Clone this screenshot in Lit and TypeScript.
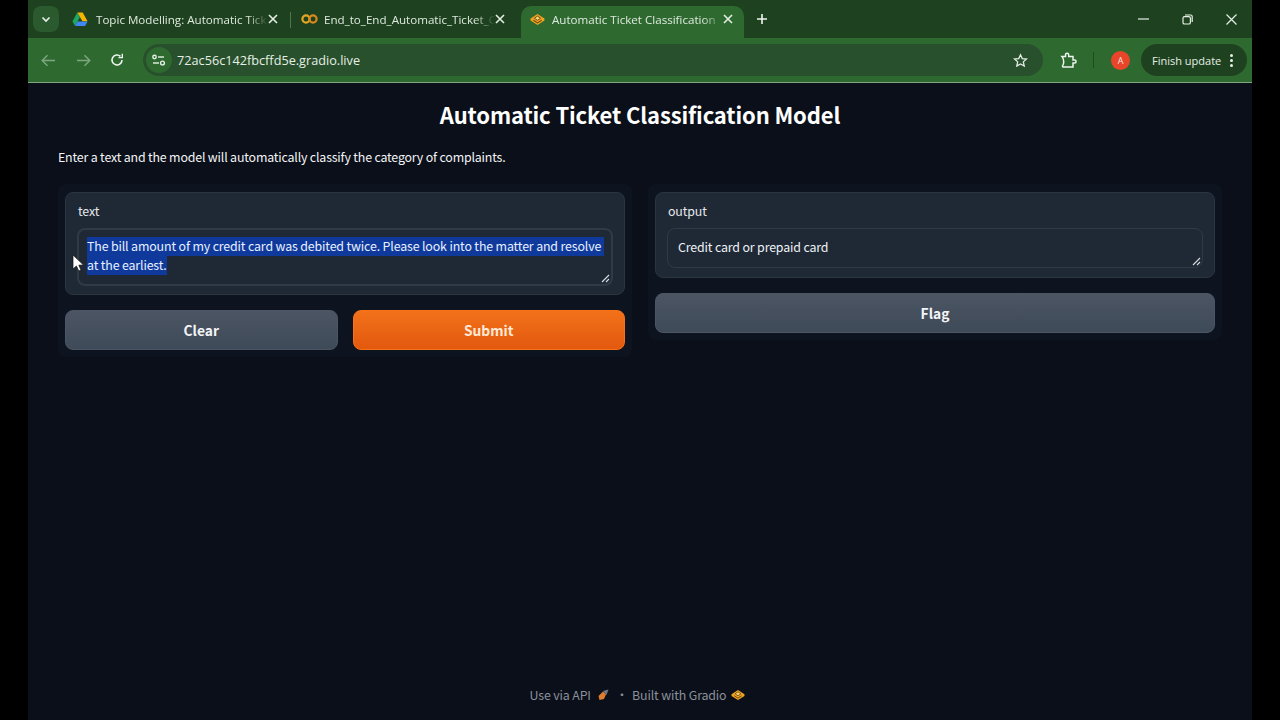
import { LitElement, html, css, svg } from "lit";
import { customElement } from "lit/decorators.js";

const gradioLogo = (size: number) => html`<svg width=${size} height=${size} viewBox="0 0 16 16" fill="none">
  <path d="M8 2.2 L15.4 7 V9 L8 13.8 L0.6 9 V7 Z" fill="#f0a21f"/>
  <path d="M8 4.4 L11.4 6.6 L8 8.8 L4.6 6.6 Z" fill="#f9d776" stroke="#6b4d10" stroke-width="1"/>
  <path d="M3.6 8.8 L8 11.6 L12.4 8.8" stroke="#6b4d10" stroke-width="1.1"/>
</svg>`;

const closeIcon = html`<svg class="x" width="10" height="10" viewBox="0 0 10 10">
  <path d="M1 1 L9 9 M9 1 L1 9" stroke="#e6efe6" stroke-width="1.6"/>
</svg>`;

@customElement("app-root")
export class AppRoot extends LitElement {
  static styles = css`
    :host {
      display: block;
      width: 1280px;
      height: 720px;
      background: #000;
      overflow: hidden;
      font-family: "Noto Sans CJK SC", "Noto Sans", sans-serif;
    }
    .frame {
      position: relative;
      width: 1224px;
      height: 720px;
      margin: 0 auto;
      display: flex;
      flex-direction: column;
      background: #0b0f19;
    }

    /* browser chrome */
    .tabstrip {
      height: 38px;
      background: #1e421f;
      display: flex;
      align-items: flex-end;
      font-family: "Open Sans", "Noto Sans", sans-serif;
      font-size: 11.6px;
      color: #dfe9df;
    }
    .tab-menu {
      width: 26px;
      height: 26px;
      margin: 0 0 6px 5px;
      border-radius: 8px;
      background: #2b5a2e;
      display: flex;
      align-items: center;
      justify-content: center;
    }
    .tab {
      height: 32px;
      display: flex;
      align-items: center;
      box-sizing: border-box;
      position: relative;
    }
    .tab .label {
      flex: 1;
      min-width: 0;
      white-space: nowrap;
      overflow: hidden;
      -webkit-mask-image: linear-gradient(90deg, #000 88%, transparent);
      mask-image: linear-gradient(90deg, #000 88%, transparent);
    }
    .tab.one { width: 226px; margin-left: 6px; padding: 0 13px 6px 7px; }
    .tab.one .label { margin-left: 8px; }
    .tab.two { width: 230px; padding: 0 16px 6px 10px; }
    .tab.two .label { margin-left: 6px; }
    .tab.one::after {
      content: "";
      position: absolute;
      right: 0;
      top: 6px;
      width: 1px;
      height: 16px;
      background: #4a7a4c;
    }
    .tab.active {
      width: 223px;
      background: #2e6a30;
      border-radius: 10px 10px 0 0;
      padding: 0 11px 6px 9px;
    }
    .tab.active .label { margin-left: 7px; }
    .plus { margin: 0 0 6px 12px; width: 14px; height: 26px; display: flex; align-items: center; }
    .win {
      margin-left: auto;
      display: flex;
      align-items: center;
      gap: 33px;
      height: 38px;
      padding-right: 15px;
      align-self: flex-start;
    }

    .toolbar {
      height: 44px;
      background: #2e6a30;
      border-bottom: 1px solid #7fa681;
      display: flex;
      align-items: center;
      flex: none;
    }
    .nav {
      display: flex;
      align-items: center;
      gap: 19.5px;
      padding-left: 13px;
      width: 102px;
      box-sizing: border-box;
    }
    .omni {
      margin-left: 13px;
      width: 900px;
      height: 32px;
      border-radius: 16px;
      background: #28502c;
      display: flex;
      align-items: center;
      color: #e6efe6;
      font-family: "Open Sans", "Noto Sans", sans-serif;
      font-size: 12.7px;
      box-sizing: border-box;
    }
    .tune {
      width: 26px;
      height: 26px;
      margin-left: 3px;
      border-radius: 50%;
      background: #2e6a30;
      display: flex;
      align-items: center;
      justify-content: center;
      margin-right: 5px;
    }
    .star { margin-left: auto; margin-right: 15px; display: flex; }
    .ext { margin-left: 17px; display: flex; }
    .sep { width: 1px; height: 16px; background: #1f4a22; margin-left: 16px; }
    .avatar {
      width: 19px;
      height: 19px;
      border-radius: 50%;
      background: #e8452a;
      color: #fbe7e0;
      font-size: 9px;
      font-family: "Open Sans", sans-serif;
      display: flex;
      align-items: center;
      justify-content: center;
      margin-left: 17px;
    }
    .update {
      margin-left: 11px;
      width: 106px;
      height: 32px;
      border-radius: 16px;
      background: #1e421f;
      color: #e6efe6;
      font-family: "Open Sans", "Noto Sans", sans-serif;
      font-size: 11px;
      display: flex;
      align-items: center;
      box-sizing: border-box;
      padding-left: 11px;
      gap: 9px;
    }
    .dots { display: flex; flex-direction: column; gap: 2px; }
    .dots i { width: 3px; height: 3px; border-radius: 50%; background: #e6efe6; }

    /* gradio page */
    .page {
      flex: 1;
      display: flex;
      flex-direction: column;
      padding: 0 30px;
      color: #f3f4f6;
      font-size: 12.4px;
      letter-spacing: -0.15px;
    }
    h1 {
      margin: 14px 0 0;
      height: 34px;
      line-height: 34px;
      text-align: center;
      font-size: 22px;
      letter-spacing: -0.13px;
      font-weight: 700;
      color: #fff;
    }
    .desc {
      margin: 16px 0 0;
      line-height: 20px;
      height: 20px;
      letter-spacing: -0.18px;
      color: #f3f4f6;
    }
    .cols {
      margin-top: 17px;
      display: flex;
      gap: 16px;
      align-items: flex-start;
    }
    .col {
      width: 574px;
      box-sizing: border-box;
      padding: 8px 7px 7px;
      background: #0d131f;
      border-radius: 8px;
      display: flex;
      flex-direction: column;
    }
    .block {
      background: #1f2935;
      border: 1px solid #2b3540;
      border-radius: 8px;
      box-sizing: border-box;
      padding: 0 11px;
      display: flex;
      flex-direction: column;
    }
    .block .name {
      line-height: 20px;
      margin: 8px 0 0 1px;
      color: #e5e7eb;
    }
    .area {
      position: relative;
      margin-top: 7px;
      border: 1px solid #303a47;
      border-radius: 8px;
      background: #1f2935;
      box-sizing: border-box;
      line-height: 19px;
      color: #eef1f5;
    }
    .left .block { height: 103px; }
    .left .area { height: 58px; padding: 7px 8px 0; border-width: 2px; }
    .right .block { height: 86px; }
    .right .area { height: 40px; padding: 9px 10px; }
    .sel { background: #0f3a9c; color: #e8f0ff; display: inline-block; white-space: pre; height: 19px; }
    .grip { position: absolute; right: 1px; bottom: 1px; display: flex; }

    .btns { display: flex; gap: 15px; margin-top: 15px; }
    button {
      flex: 1;
      height: 40px;
      border: 1px solid #4b5563;
      border-radius: 8px;
      font: 700 13.8px "Noto Sans CJK SC", "Noto Sans", sans-serif;
      color: #f3f4f6;
      background: linear-gradient(180deg, #4b5563, #3f4a58);
      padding: 0;
    }
    button.primary {
      border-color: #f97316;
      background: linear-gradient(180deg, #f2711a, #e3590f);
      color: #ffe9d6;
    }
    .right { padding-bottom: 7px; }
    .right button { margin-top: 15px; flex: none; }

    footer {
      margin-top: auto;
      height: 35px;
      display: flex;
      justify-content: center;
      align-items: flex-start;
      line-height: 20px;
      color: #8a909b;
      padding-right: 5px;
    }
    footer .api { display: flex; align-items: center; gap: 6px; }
    footer .dot { margin: 0 4px 0 7px; }
    footer .built { display: flex; align-items: center; gap: 5px; }
    .cursor { position: absolute; left: 44px; top: 254px; display: flex; }
  `;

  private drive() {
    return svg`<svg width="16" height="15" viewBox="0 0 16 15">
      <path d="M5.3 0.5 H10.7 L15.6 9.2 H10.4 Z" fill="#f4b400"/>
      <path d="M5.3 0.5 L8 5 L3.1 14 L0.4 9.5 Z" fill="#1fa463"/>
      <path d="M5.5 9.5 H15.6 L13 14 H3.1 Z" fill="#4285f4"/>
    </svg>`;
  }

  private colab() {
    return svg`<svg width="17" height="10" viewBox="0 0 17 10" fill="none">
      <circle cx="5" cy="5" r="3.6" stroke="#e8a623" stroke-width="2.2"/>
      <circle cx="12" cy="5" r="3.6" stroke="#d98a1e" stroke-width="2.2"/>
    </svg>`;
  }

  private grip() {
    return svg`<svg width="9" height="9" viewBox="0 0 9 9"><path d="M1 8 L8 1 M5 8 L8 5" stroke="#d8dde3" stroke-width="1.1"/></svg>`;
  }

  render() {
    return html`
      <div class="frame">
        <div class="tabstrip">
          <div class="tab-menu">
            <svg width="10" height="7" viewBox="0 0 10 7"><path d="M1.5 1.5 L5 5 L8.5 1.5" fill="none" stroke="#e6efe6" stroke-width="1.7"/></svg>
          </div>
          <div class="tab one">${this.drive()}<span class="label">Topic Modelling: Automatic Tick</span>${closeIcon}</div>
          <div class="tab two">${this.colab()}<span class="label">End_to_End_Automatic_Ticket_C</span>${closeIcon}</div>
          <div class="tab active">${gradioLogo(15)}<span class="label">Automatic Ticket Classification</span>${closeIcon}</div>
          <div class="plus"><svg width="12" height="12" viewBox="0 0 12 12"><path d="M6 1 V11 M1 6 H11" stroke="#f0f5f0" stroke-width="1.6"/></svg></div>
          <div class="win">
            <svg width="11" height="2" viewBox="0 0 11 2"><path d="M0 1 H11" stroke="#e6efe6" stroke-width="1.2"/></svg>
            <svg width="11" height="11" viewBox="0 0 11 11" fill="none" stroke="#e6efe6" stroke-width="1.2"><rect x="1" y="2.6" width="7.4" height="7.4" rx="1.6"/><path d="M3 1 H8.6 A1.6 1.6 0 0 1 10.2 2.6 V8"/></svg>
            <svg width="11" height="11" viewBox="0 0 11 11"><path d="M0.5 0.5 L10.5 10.5 M10.5 0.5 L0.5 10.5" stroke="#e6efe6" stroke-width="1.2"/></svg>
          </div>
        </div>

        <div class="toolbar">
          <div class="nav">
            <svg width="15" height="13" viewBox="0 0 15 13" fill="none" stroke="#7fa681" stroke-width="1.4"><path d="M14 6.5 H1.5 M6.5 1.2 L1.2 6.5 L6.5 11.8"/></svg>
            <svg width="15" height="13" viewBox="0 0 15 13" fill="none" stroke="#7fa681" stroke-width="1.4"><path d="M1 6.5 H13.5 M8.5 1.2 L13.8 6.5 L8.5 11.8"/></svg>
            <svg width="14" height="14" viewBox="0 0 14 14" fill="none" stroke="#eef4ee" stroke-width="1.6"><path d="M12 7 A5 5 0 1 1 10.4 3.3"/><path d="M12.3 0.8 V4.6 H8.5" stroke-width="1.4"/></svg>
          </div>
          <div class="omni">
            <div class="tune">
              <svg width="16" height="14" viewBox="0 0 16 14" fill="none" stroke="#e6efe6" stroke-width="1.4"><circle cx="3.5" cy="4" r="1.7"/><path d="M7 4 H13"/><path d="M2 10 H8"/><circle cx="11.5" cy="10" r="1.9"/></svg>
            </div>
            <span>72ac56c142fbcffd5e.gradio.live</span>
            <span class="star"><svg width="15" height="15" viewBox="0 0 24 24" fill="none" stroke="#e6efe6" stroke-width="2"><path d="M12 2.8 L14.8 9 L21.6 9.7 L16.5 14.2 L18 20.9 L12 17.4 L6 20.9 L7.5 14.2 L2.4 9.7 L9.2 9 Z"/></svg></span>
          </div>
          <span class="ext"><svg width="17" height="17" viewBox="0 0 17 17" fill="none" stroke="#eef4ee" stroke-width="1.5"><path d="M2 4.5 H5.5 V2.8 A1.6 1.6 0 0 1 8.7 2.8 V4.5 H13 V8 H14.6 A1.5 1.5 0 0 1 14.6 11 H13 V15 H3 A1 1 0 0 1 2.5 14 C4.2 12 4.2 7 2 4.5 Z"/></svg></span>
          <span class="sep"></span>
          <span class="avatar">A</span>
          <div class="update">
            <span>Finish update</span>
            <span class="dots"><i></i><i></i><i></i></span>
          </div>
        </div>

        <div class="page">
          <h1>Automatic Ticket Classification Model</h1>
          <p class="desc">Enter a text and the model will automatically classify the category of complaints.</p>
          <div class="cols">
            <div class="col left">
              <div class="block">
                <div class="name">text</div>
                <div class="area">
                  <div><span class="sel">The bill amount of my credit card was debited twice. Please look into the matter and resolve </span></div>
                  <div><span class="sel">at the earliest.</span></div>
                  <span class="grip">${this.grip()}</span>
                </div>
              </div>
              <div class="btns">
                <button>Clear</button>
                <button class="primary">Submit</button>
              </div>
            </div>
            <div class="col right">
              <div class="block">
                <div class="name">output</div>
                <div class="area">
                  Credit card or prepaid card
                  <span class="grip">${this.grip()}</span>
                </div>
              </div>
              <button>Flag</button>
            </div>
          </div>
          <footer>
            <span class="api">Use via API
              <svg width="12" height="12" viewBox="0 0 12 12"><path d="M11.5 0.5 L6 2 L9.5 6 Z" fill="#6f7a8e"/><path d="M6 2.5 L9 5.5 L7 10 L2.5 11 L1.5 7 Z" fill="#dd7d2e"/></svg>
            </span>
            <span class="dot">·</span>
            <span class="built">Built with Gradio ${gradioLogo(14)}</span>
          </footer>
        </div>

        <span class="cursor">
          <svg width="13" height="18" viewBox="0 0 13 18"><path d="M1 1 V15 L4.4 12 L6.8 17 L9 16 L6.8 11.2 L11.5 11 Z" fill="#fff" stroke="#111" stroke-width="0.7"/></svg>
        </span>
      </div>
    `;
  }
}
